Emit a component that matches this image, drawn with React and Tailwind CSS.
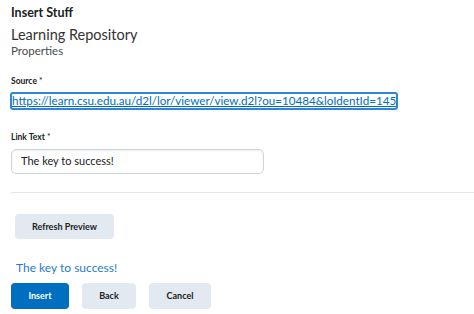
export default function App() {
  return (
    <div className="w-[474px] h-[314px] overflow-hidden bg-white text-[#202122]" style={{ fontFamily: "Lato, 'Noto Sans', sans-serif" }}>
      <div className="pl-[11px] pt-[4px]">
        <div className="text-[12.5px] font-bold leading-[18px]">Insert Stuff</div>
        <div className="mt-[4px] text-[14.5px] leading-[18px] text-[#333]">Learning Repository</div>
        <div className="text-[11.5px] leading-[14px] text-[#494c4e]">Properties</div>
        <div className="mt-[17px] text-[8.5px] font-bold leading-[12px]">Source <span className="font-normal">*</span></div>
        <div className="mt-[5px] -ml-[1px] w-[388px] h-[18px] border-2 border-[#2f86d4] rounded-[3px] flex items-center overflow-hidden">
          <span className="text-[11.65px] leading-[14px] text-[#006fbf] underline whitespace-nowrap">https://learn.csu.edu.au/d2l/lor/viewer/view.d2l?ou=10484&amp;loIdentId=145</span>
        </div>
        <div className="mt-[21px] text-[8.5px] font-bold leading-[12px]">Link Text <span className="font-normal">*</span></div>
        <div className="mt-[6px] w-[253px] h-[25px] border border-[#cdd5dc] rounded-[5px] flex items-center pl-[9px] text-[11px] text-[#202122] shadow-[inset_0_1px_2px_rgba(0,0,0,0.08)]">
          The key to success!
        </div>
      </div>
      <div className="mt-[18px] ml-[11px] h-px bg-[#e3e6e9]"></div>
      <div className="mt-[21px] ml-[15px] w-[99px] h-[25px] bg-[#e3e9f1] rounded-[4px] flex items-center justify-center text-[9px] font-bold">
        Refresh Preview
      </div>
      <div className="mt-[22px] ml-[16px] text-[12px] leading-[14px] text-[#1f7bcb]">The key to success!</div>
      <div className="mt-[8px] ml-[11px] flex gap-[13px]">
        <div className="w-[58px] h-[26px] bg-[#006fbf] rounded-[4px] flex items-center justify-center text-[9px] font-bold text-white">Insert</div>
        <div className="w-[54px] h-[26px] bg-[#e3e9f1] rounded-[4px] flex items-center justify-center text-[9px] font-bold">Back</div>
        <div className="w-[62px] h-[26px] bg-[#e3e9f1] rounded-[4px] flex items-center justify-center text-[9px] font-bold">Cancel</div>
      </div>
    </div>
  );
}
